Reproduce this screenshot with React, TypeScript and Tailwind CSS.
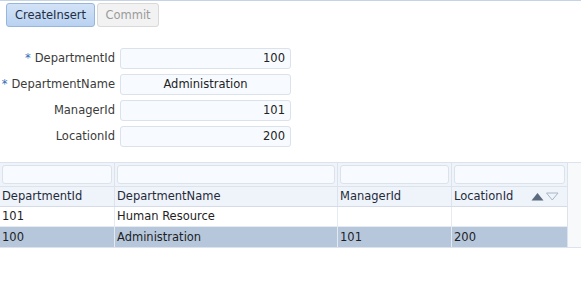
import React from "react";

const font = { fontFamily: '"DejaVu Sans", Verdana, sans-serif' };

function FormRow({ label, req, value, align }: { label: string; req?: boolean; value: string; align: "right" | "center" }) {
  return (
    <div className="flex items-center h-[21px]">
      <div className="w-[115px] text-right text-[11.5px] text-[#3b3b3b] whitespace-nowrap">
        {req && <span className="text-[#2e6eb5] mr-[4px]">*</span>}
        {label}
      </div>
      <div
        className={`ml-[5px] w-[171px] h-[21px] rounded-[3px] border border-[#dbe2ea] bg-[#f7fbff] text-[11.5px] text-[#222] flex items-center px-[5px] ${
          align === "right" ? "justify-end" : "justify-center"
        }`}
      >
        {value}
      </div>
    </div>
  );
}

const cols = [
  { name: "DepartmentId", w: "w-[115px]" },
  { name: "DepartmentName", w: "w-[223px]" },
  { name: "ManagerId", w: "w-[114px]" },
  { name: "LocationId", w: "w-[115px]" },
];

const rows = [
  { cells: ["101", "Human Resource", "", ""], sel: false },
  { cells: ["100", "Administration", "101", "200"], sel: true },
];

export default function App() {
  return (
    <div className="w-[581px] h-[281px] bg-white border-t border-[#c5d3e4] overflow-hidden" style={font}>
      <div className="flex gap-[2px] pl-[6px] pt-[2px]">
        <div className="h-[24px] w-[89px] justify-center flex items-center pt-[1px] rounded-[3px] border border-[#97b6de] bg-gradient-to-b from-[#d3e3f7] to-[#b9d2f1] text-[11.5px] text-[#1f2f45]">
          CreateInsert
        </div>
        <div className="h-[24px] w-[62px] justify-center flex items-center pt-[1px] rounded-[3px] border border-[#d9d9d9] bg-[#f2f2f2] text-[11.5px] text-[#9b9b9b]">
          Commit
        </div>
      </div>

      <div className="flex flex-col gap-[5px] mt-[21px]">
        <FormRow label="DepartmentId" req value="100" align="right" />
        <FormRow label="DepartmentName" req value="Administration" align="center" />
        <FormRow label="ManagerId" value="101" align="right" />
        <FormRow label="LocationId" value="200" align="right" />
      </div>

      <div className="mt-[15px] border-t border-b border-[#dde3ec] flex">
        <div className="flex flex-col">
          <div className="flex h-[24px] bg-[#eff3fa] border-b border-[#dde3ec]">
            {cols.map((c, i) => (
              <div key={c.name} className={`${c.w} ${i < 3 ? "border-r border-[#dde3ec]" : ""} p-[2px]`}>
                <div className="w-full h-full rounded-[3px] border border-[#dbe2ea] bg-[#f7fbff]" />
              </div>
            ))}
          </div>
          <div className="flex h-[20px] bg-[#eff3fa] border-b border-[#d5dce7]">
            {cols.map((c, i) => (
              <div
                key={c.name}
                className={`${c.w} ${i < 3 ? "border-r border-[#dde3ec]" : ""} flex items-center pt-[1px] px-[2px] text-[11.5px] text-[#1f2b3a] relative`}
              >
                {c.name}
                {i === 3 && (
                  <svg className="absolute right-[8px] top-[5px]" width="28" height="9" viewBox="0 0 28 9">
                    <polygon points="0.5,8.5 6.5,1 12.5,8.5" fill="#5b6b7d" />
                    <polygon points="15.5,1 27,1 21.25,8" fill="none" stroke="#a9b6c6" strokeWidth="1" />
                  </svg>
                )}
              </div>
            ))}
          </div>
          {rows.map((r, ri) => (
            <div key={ri} className={`flex h-[20px] ${r.sel ? "bg-[#b6c7dc]" : "bg-white"} ${ri === 0 ? "border-b border-[#e6ebf1]" : ""}`}>
              {cols.map((c, i) => (
                <div
                  key={c.name}
                  className={`${c.w} ${i < 3 ? (r.sel ? "border-r border-[#e3e9f0]" : "border-r border-[#e6ebf1]") : ""} flex items-center pt-[1px] px-[2px] text-[11.5px] text-[#1e1e1e]`}
                >
                  {r.cells[i]}
                </div>
              ))}
            </div>
          ))}
        </div>
        <div className="flex-1 bg-[#f8f9fb] border-l border-[#dde3ec]" />
      </div>
    </div>
  );
}
